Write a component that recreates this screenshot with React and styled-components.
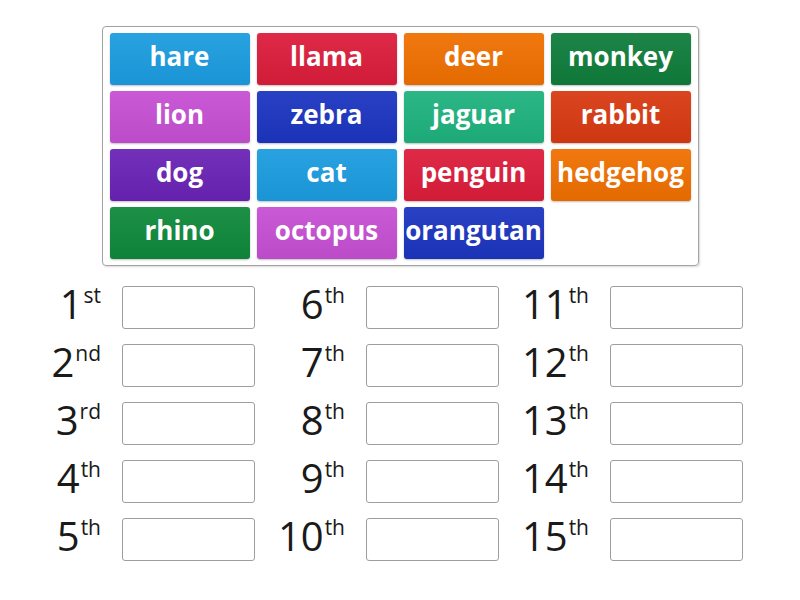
import React from 'react'
import styled, { createGlobalStyle } from 'styled-components'

const animals = [
    ['hare', '#1c9ce0'],
    ['llama', '#dc1d3b'],
    ['deer', '#f07000'],
    ['monkey', '#0f7d3b'],
    ['lion', '#c64fd3'],
    ['zebra', '#1c35c0'],
    ['jaguar', '#1fb27e'],
    ['rabbit', '#d83a12'],
    ['dog', '#6a23b5'],
    ['cat', '#1c9ce0'],
    ['penguin', '#dc1d3b'],
    ['hedgehog', '#f07000'],
    ['rhino', '#0f893b'],
    ['octopus', '#c64fd3'],
    ['orangutan', '#1c35c0'],
]

const places = [
    ['1', 'st'], ['6', 'th'], ['11', 'th'],
    ['2', 'nd'], ['7', 'th'], ['12', 'th'],
    ['3', 'rd'], ['8', 'th'], ['13', 'th'],
    ['4', 'th'], ['9', 'th'], ['14', 'th'],
    ['5', 'th'], ['10', 'th'], ['15', 'th'],
]

function App() {
    return (
        <Page>
            <GlobalStyle />
            <Board>
                {animals.map(([name, color]) => (
                    <Tile key={name} $color={color}>{name}</Tile>
                ))}
            </Board>
            <Answers>
                {places.map(([num, suffix]) => (
                    <Slot key={num}>
                        <Label>{num}<Sup>{suffix}</Sup></Label>
                        <Box />
                    </Slot>
                ))}
            </Answers>
        </Page>
    )
}

const GlobalStyle = createGlobalStyle`
    body {
        margin: 0;
        background: #fff;
        font-family: "Open Sans", "Noto Sans", sans-serif;
    }
`

const Page = styled.div`
    padding-top: 26px;
    width: 800px;
`

const Board = styled.div`
    width: 581px;
    margin: 0 auto;
    padding: 6px 7px;
    border: 1px solid #a3a3a3;
    border-radius: 4px;
    box-shadow: 1px 1px 2px rgba(0, 0, 0, 0.15);
    display: grid;
    grid-template-columns: repeat(4, 140px);
    grid-auto-rows: 52px;
    gap: 6px 7px;
`

const Tile = styled.div`
    display: flex;
    align-items: center;
    justify-content: center;
    padding-bottom: 7px;
    box-sizing: border-box;
    border-radius: 3px;
    background: ${p => p.$color};
    background-image: linear-gradient(to bottom, rgba(255, 255, 255, 0.06), rgba(0, 0, 0, 0.05));
    box-shadow: 0 1px 2px rgba(0, 0, 0, 0.25);
    color: #fff;
    font-size: 26px;
    font-weight: 700;
    white-space: nowrap;
`

const Answers = styled.div`
    margin-top: 20px;
    padding-left: 21px;
    display: grid;
    grid-template-columns: repeat(3, 234px);
    column-gap: 10px;
    row-gap: 15px;
`

const Slot = styled.div`
    display: grid;
    grid-template-columns: 80px 133px;
    column-gap: 21px;
    align-items: start;
`

const Label = styled.div`
    text-align: right;
    font-size: 40px;
    line-height: 36px;
    color: #1a1a1a;
    white-space: nowrap;
`

const Sup = styled.span`
    margin-left: 1px;
    font-size: 21px;
    line-height: 0;
    vertical-align: 16px;
`

const Box = styled.div`
    height: 43px;
    box-sizing: border-box;
    border: 1px solid #9e9e9e;
    border-radius: 3px;
    background: #fff;
`

export default App
